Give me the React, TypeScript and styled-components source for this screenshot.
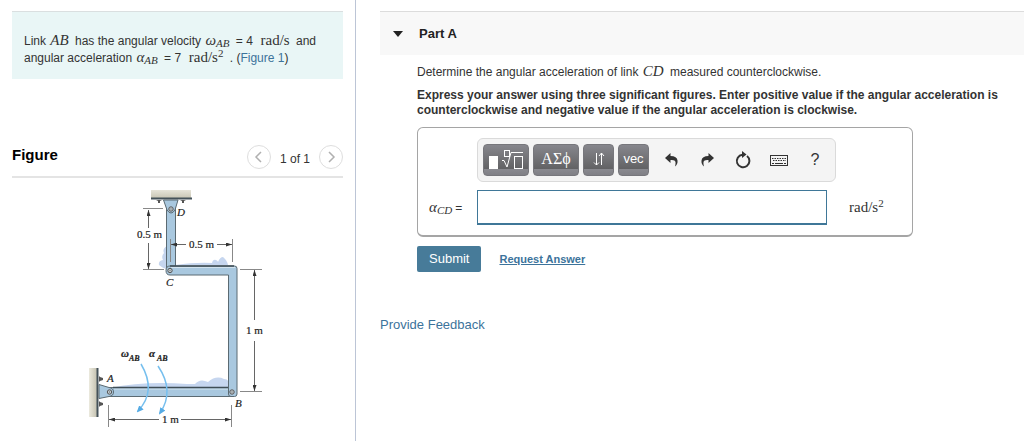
import React from "react";
import styled, { createGlobalStyle } from "styled-components";

const sans = `"Liberation Sans", Arial, sans-serif`;
const serif = `"Liberation Serif", "Times New Roman", serif`;

const GlobalStyle = createGlobalStyle`
  *, *::before, *::after { box-sizing: border-box; }
  body { margin: 0; background: #fff; color: #333; font: 12px/16px ${sans}; }
`;

const Page = styled.div`
  display: grid;
  grid-template-columns: 356px minmax(0, 1fr);
  min-height: 100vh;
`;

const Sidebar = styled.aside`
  padding: 11px 12px 0;
  border-right: 1px solid #bcc5d6;
`;

const Problem = styled.p`
  margin: 0;
  padding: 21px 12px 12px;
  border-top: 1px solid #dadfe0;
  background: #e9f6f6;
  line-height: 17px;
`;

const MathText = styled.span<{ $italic?: boolean }>`
  margin: 0 3px 0 1px;
  font-family: ${serif};
  font-size: 15px;
  line-height: 1;
  font-style: ${(p) => (p.$italic ? "italic" : "normal")};

  sub, sup { font-size: 11px; line-height: 0; }
  sub { vertical-align: -2px; }
  sup { vertical-align: 5px; }
`;

const Link = styled.a`
  color: #3c739b;
  text-decoration: none;
`;

const FigureHeader = styled.header`
  display: flex;
  align-items: center;
  justify-content: space-between;
  margin-top: 66px;
  padding-bottom: 7px;
  border-bottom: 2px solid #e4e4e4;
`;

const FigureTitle = styled.h2`
  margin: 0;
  padding-bottom: 4px;
  color: #000;
  font-size: 15px;
  line-height: 18px;
`;

const Pager = styled.nav`
  display: flex;
  align-items: center;
  gap: 9px;
`;

const PagerCount = styled.span`
  padding-top: 4px;
  color: #333;
`;

const PagerButton = styled.button`
  display: grid;
  place-items: center;
  width: 24px;
  height: 24px;
  padding: 0;
  border: 1px solid #dedede;
  border-radius: 50%;
  background: #fff;
  color: #b0b0b0;
`;

const Diagram = styled.svg`
  display: block;
  width: 100%;
  height: auto;
  font-family: ${serif};
`;

const Main = styled.main`
  padding: 11px 0 0 24px;
`;

const PartHeader = styled.header`
  display: flex;
  align-items: center;
  gap: 16px;
  padding: 14px 13px;
  border-top: 1px solid #dcdcdc;
  background: #f8f8f8;
`;

const PartTitle = styled.h2`
  margin: 0;
  color: #222;
  font-size: 13px;
  line-height: 15px;
`;

const PartBody = styled.section`
  padding: 9px 13px 0 37px;
`;

const Question = styled.p`
  margin: 0;
`;

const Instruction = styled.p`
  margin: 8px 0 9px;
  font-size: 12px;
  font-weight: bold;
  line-height: 15px;
`;

const AnswerBox = styled.div`
  display: grid;
  grid-template-columns: 48px minmax(0, 350px) minmax(64px, 1fr);
  column-gap: 1px;
  row-gap: 8px;
  align-items: center;
  max-width: 496px;
  padding: 10px 10px 10px;
  border: 1px solid #a5a5a5;
  border-bottom-width: 2px;
  border-radius: 6px;
`;

const Toolbar = styled.div`
  grid-column: 2 / 4;
  display: flex;
  align-items: center;
  gap: 4px;
  max-width: 359px;
  height: 44px;
  padding: 0 2px 1px 5px;
  border: 1px solid #dadada;
  border-radius: 6px;
  background: #f4f4f4;
`;

const ToolButton = styled.button<{ $wide?: boolean; $spaced?: boolean }>`
  display: grid;
  place-items: center;
  width: ${(p) => (p.$wide ? 46 : 31)}px;
  height: 32px;
  padding: 0 0 2px;
  border: 1px solid #77777c;
  border-radius: 4px;
  background: linear-gradient(#87878d 0%, #626264 80%, #89898f 81%, #808086 100%);
  color: #fff;
  font: 13px/16px ${sans};
`;

const Greek = styled.span`
  font: 16px/18px ${serif};
`;

const IconTools = styled.div`
  display: flex;
  flex: 1;
  justify-content: space-around;
`;

const IconButton = styled.button`
  display: grid;
  place-items: center;
  width: 24px;
  height: 24px;
  padding: 0;
  border: 0;
  background: none;
  color: #333;
  font: 16px/20px ${sans};
`;

const AnswerLabel = styled.label`
  white-space: nowrap;
`;

const AnswerInput = styled.input`
  width: 100%;
  height: 35px;
  padding: 0 8px;
  border: 1px solid #3f7798;
  border-bottom-width: 2px;
  background: #fff;
  font: 14px ${sans};
`;

const Unit = styled.span`
  padding-left: 20px;
`;

const Actions = styled.div`
  display: flex;
  align-items: center;
  gap: 18px;
  margin-top: 9px;
`;

const SubmitButton = styled.button`
  height: 26px;
  padding: 0 12px;
  border: 0;
  border-radius: 2px;
  background: #477b99;
  color: #fff;
  font: 13px/16px ${sans};
`;

const RequestLink = styled(Link)`
  font-size: 11px;
  font-weight: bold;
  text-decoration: underline;
`;

const Feedback = styled.p`
  margin: 45px 0 0;
  font-size: 13px;
`;

const Var = ({ base, sub }: { base: string; sub?: string }) => (
  <MathText $italic>
    {base}
    {sub && <sub>{sub}</sub>}
  </MathText>
);

const Chevron = ({ d }: { d: string }) => (
  <svg width="10" height="12" viewBox="0 0 10 12" fill="none" stroke="currentColor" strokeWidth="1.5">
    <path d={d} />
  </svg>
);

const Pin = ({ x, y }: { x: number; y: number }) => (
  <g>
    <circle cx={x} cy={y} r="2.2" fill="#c3cdd2" stroke="#555" strokeWidth="1" />
    <circle cx={x} cy={y} r="0.7" fill="#777" />
  </g>
);

const LinkageDiagram = () => (
  <Diagram viewBox="12 178 331 260" role="img" aria-label="Linkage of members AB, BC and CD">
    <defs>
      <linearGradient id="slab" x1="0" y1="0" x2="0" y2="1">
        <stop offset="0" stopColor="#e6e4d9" />
        <stop offset="1" stopColor="#c9c6b5" />
      </linearGradient>
      <linearGradient id="wall">
        <stop offset="0" stopColor="#eceade" />
        <stop offset="1" stopColor="#c4c1b0" />
      </linearGradient>
      <marker id="tip" viewBox="0 0 6 4" refX="6" refY="2" markerWidth="6" markerHeight="4" orient="auto-start-reverse">
        <path d="M0 0 6 2 0 4Z" fill="#333" />
      </marker>
      <marker id="blueTip" viewBox="0 0 7 6" refX="5" refY="3" markerWidth="7" markerHeight="6" markerUnits="userSpaceOnUse" orient="auto">
        <path d="M0 0 7 3 0 6Z" fill="#56abe4" />
      </marker>
    </defs>

    <g fill="#c6d6ef">
      <path d="M167 246q-5 3-3 7-3 3-1 7-5 1-4 5 3 3 8 4z" />
      <path d="M175 265q22-3 37-2 1-4 4-3 2 1 2 2 2-5 5-5 4 3 5 8z" />
      <path d="M110 388q34-7 77-4h8q5-6 13-2 8-7 16-3 6 0 6 9z" />
    </g>

    <rect x="151" y="190" width="40" height="8" fill="url(#slab)" />
    <path d="M151 198.500H192" stroke="#45525a" strokeWidth="2" />
    <path d="M156 200h6l-2 1v2h-2v-2zM180 200h6l-2 1v2h-2v-2z" fill="#555" />
    <rect x="89" y="368" width="8" height="49" fill="url(#wall)" />
    <path d="M97.500 368V417" stroke="#45525a" strokeWidth="2" />
    <path d="M99 376v6l1-1 3-1v-2l-3-1zM99 401v6l1-1 3-1v-2l-3-1z" fill="#555" />

    <g fill="#a9c8df" stroke="#5b6a72" strokeWidth="1">
      <path d="M166.500 206V270H175.500V206Z" />
      <path d="M163.500 200H178L175 210Q171 216 167 210Z" />
      <path d="M109 387.500H232V396.500H109Z" />
      <path d="M99 384.500 109 387.500Q113.500 388 113.500 392T109 396.500L99 398.500Z" />
      <path d="M170 266H234.500Q237 266 237 268.500V394Q237 396.500 234.500 396.500H231Q228.500 396.500 228.500 394V275H170Q166 275 166 270.500T170 266Z" />
    </g>
    <path d="M114 389H228M171 267.500H235" stroke="#d3e3ee" fill="none" />
    <path d="M113 387.500H228M170 266H234" stroke="#3f4e56" strokeWidth="1.400" />
    <Pin x={171} y={209} />
    <Pin x={170} y={270.500} />
    <Pin x={232} y={392} />
    <Pin x={109.500} y={392} />

    <g stroke="#888" strokeWidth="1">
      <path d="M143 208.500H163M143 269.500H164M170.500 239V262M232.500 239V262M240 269.500H262M240 391.500H262M108.500 405V427M231.500 405V427" />
    </g>
    <g stroke="#666" strokeWidth="1">
      <path d="M148.500 228V210" markerEnd="url(#tip)" />
      <path d="M148.500 243V269" markerEnd="url(#tip)" />
      <path d="M186 244.500H171" markerEnd="url(#tip)" />
      <path d="M217 244.500H232" markerEnd="url(#tip)" />
      <path d="M254.500 320V270" markerEnd="url(#tip)" />
      <path d="M254.500 341V391" markerEnd="url(#tip)" />
      <path d="M159 419.500H109" markerEnd="url(#tip)" />
      <path d="M181 419.500H231" markerEnd="url(#tip)" />
    </g>

    <g fill="none" stroke="#76bfee" strokeWidth="1.500">
      <path d="M141 364Q157 391 138 411" markerEnd="url(#blueTip)" />
      <path d="M158 366Q175 391 160 413" markerEnd="url(#blueTip)" />
    </g>

    <g fill="#222" stroke="#222" strokeWidth="0.200" fontSize="11">
      <text x="137" y="238">0.5 m</text>
      <text x="189" y="248">0.5 m</text>
      <text x="246" y="334">1 m</text>
      <text x="162" y="423">1 m</text>
      <g fontStyle="italic">
        <text x="177" y="216">D</text>
        <text x="166" y="286">C</text>
        <text x="107" y="382">A</text>
        <text x="235" y="407">B</text>
        <g fontWeight="bold">
          <text x="121" y="357">ω</text>
          <text x="149" y="357">α</text>
          <text x="129" y="361" fontSize="8">AB</text>
          <text x="157" y="361" fontSize="8">AB</text>
        </g>
      </g>
    </g>
  </Diagram>
);

const TemplateIcon = () => (
  <svg width="36" height="22" viewBox="0 0 36 22" fill="none" stroke="#fff">
    <rect x="1" y="8" width="9" height="13" fill="#fff" stroke="none" />
    <rect x="16.500" y="2.500" width="5" height="6" />
    <path d="M14 12.500h2l3 6.500 4-14.500h12" />
    <rect x="26.500" y="8.500" width="8" height="12" />
  </svg>
);

const ArrowsIcon = () => (
  <svg width="14" height="16" viewBox="0 0 14 16" fill="none" stroke="#fff">
    <path d="M4.500 2V14M2 11.500 4.500 14M9.500 14V2M9.500 2 12 5M7 5 9.500 2M4.500 14 7 11.500" />
  </svg>
);

const arrowPath = "M5.500 0 0 5l5.500 5V7Q10 6.500 10.500 9q.300 2-.500 4.500 3-2.500 2.500-6Q12 3 5.500 3z";

const UndoIcon = () => (
  <svg width="13" height="14" viewBox="0 0 13 14" fill="currentColor">
    <path d={arrowPath} />
  </svg>
);

const RedoIcon = () => (
  <svg width="13" height="14" viewBox="0 0 13 14" fill="currentColor">
    <g transform="translate(13 0) scale(-1 1)">
      <path d={arrowPath} />
    </g>
  </svg>
);

const ResetIcon = () => (
  <svg width="18" height="18" viewBox="0 0 18 18">
    <path d="M13 5A6.300 6.300 0 1 1 8.500 3.700" fill="none" stroke="currentColor" strokeWidth="2" />
    <path d="M8 0 12.500 3.500 8 7z" fill="currentColor" />
  </svg>
);

const KeyboardIcon = () => (
  <svg width="18" height="12" viewBox="0 0 18 12" fill="none" stroke="currentColor">
    <rect x="0.500" y="1.500" width="17" height="10" />
    <path d="M2 4.500H16M3 6.500H16" strokeDasharray="1.500 1" />
    <path d="M2 9.500H4M5 9.500H13M14 9.500H16" />
  </svg>
);

export default function App() {
  return (
    <>
      <GlobalStyle />
      <Page>
        <Sidebar>
          <Problem>
            Link <Var base="AB" /> has the angular velocity <Var base="ω" sub="AB" /> = 4 &nbsp;
            <MathText>rad/s</MathText> and
            <br />
            angular acceleration <Var base="α" sub="AB" /> = 7 &nbsp;
            <MathText>
              rad/s<sup>2</sup>
            </MathText>{" "}
            . (<Link href="#figure">Figure 1</Link>)
          </Problem>
          <FigureHeader>
            <FigureTitle id="figure">Figure</FigureTitle>
            <Pager aria-label="Figures">
              <PagerButton type="button" aria-label="Previous figure">
                <Chevron d="M7 1 2 6l5 5" />
              </PagerButton>
              <PagerCount>1 of 1</PagerCount>
              <PagerButton type="button" aria-label="Next figure">
                <Chevron d="M3 1l5 5-5 5" />
              </PagerButton>
            </Pager>
          </FigureHeader>
          <LinkageDiagram />
        </Sidebar>

        <Main>
          <PartHeader>
            <svg width="10" height="6" viewBox="0 0 10 6" aria-hidden="true">
              <path d="M0 0h10L5 6z" fill="#222" />
            </svg>
            <PartTitle>Part A</PartTitle>
          </PartHeader>
          <PartBody>
            <Question>
              Determine the angular acceleration of link <Var base="CD" /> measured counterclockwise.
            </Question>
            <Instruction>
              Express your answer using three significant figures. Enter positive value if the angular acceleration is
              counterclockwise and negative value if the angular acceleration is clockwise.
            </Instruction>
            <AnswerBox>
              <Toolbar role="toolbar" aria-label="Equation tools">
                <ToolButton type="button" $wide aria-label="Templates">
                  <TemplateIcon />
                </ToolButton>
                <ToolButton type="button" $wide>
                  <Greek>ΑΣϕ</Greek>
                </ToolButton>
                <ToolButton type="button" aria-label="Subscript and superscript">
                  <ArrowsIcon />
                </ToolButton>
                <ToolButton type="button">vec</ToolButton>
                <IconTools>
                  <IconButton type="button" aria-label="Undo">
                    <UndoIcon />
                  </IconButton>
                  <IconButton type="button" aria-label="Redo">
                    <RedoIcon />
                  </IconButton>
                  <IconButton type="button" aria-label="Reset">
                    <ResetIcon />
                  </IconButton>
                  <IconButton type="button" aria-label="Keyboard shortcuts">
                    <KeyboardIcon />
                  </IconButton>
                  <IconButton type="button">?</IconButton>
                </IconTools>
              </Toolbar>
              <AnswerLabel htmlFor="answer">
                <Var base="α" sub="CD" />=
              </AnswerLabel>
              <AnswerInput id="answer" type="text" />
              <Unit>
                <MathText>
                  rad/s<sup>2</sup>
                </MathText>
              </Unit>
            </AnswerBox>
            <Actions>
              <SubmitButton type="submit">Submit</SubmitButton>
              <RequestLink href="#answer">Request Answer</RequestLink>
            </Actions>
          </PartBody>
          <Feedback>
            <Link href="#feedback">Provide Feedback</Link>
          </Feedback>
        </Main>
      </Page>
    </>
  );
}
